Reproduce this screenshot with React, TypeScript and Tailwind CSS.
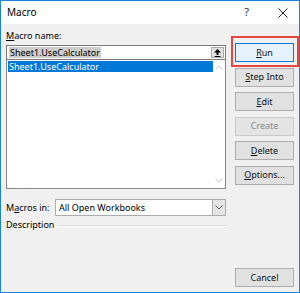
const font = { fontFamily: '"Noto Sans", "Open Sans", sans-serif' }

function U({ children }: { children: string }) {
  return <span className="underline underline-offset-[1px]">{children}</span>
}

function Btn({ children, disabled, focus }: { children: React.ReactNode; disabled?: boolean; focus?: boolean }) {
  return (
    <div
      className={
        'h-[19px] w-[59px] flex items-center justify-center text-[9px] border ' +
        (disabled
          ? 'bg-[#e4e4e4] border-[#c9c9c9] text-[#8a8a8a]'
          : focus
          ? 'bg-[#e5f1fb] border-[#0078d7] text-[#111]'
          : 'bg-[#e1e1e1] border-[#adadad] text-[#111]')
      }
    >
      {children}
    </div>
  )
}

function Chevron({ up, color }: { up?: boolean; color: string }) {
  return (
    <svg width="8" height="5" viewBox="0 0 8 5">
      <path d={up ? 'M0.5 4.5 L4 1 L7.5 4.5' : 'M0.5 0.5 L4 4 L7.5 0.5'} fill="none" stroke={color} strokeWidth="1" />
    </svg>
  )
}

export default function App() {
  return (
    <div style={font} className="w-[300px] h-[293px] border border-[#1883d7] flex flex-col bg-[#f0f0f0] text-black">
      <div className="h-[23px] bg-white flex items-center pl-[6px] pr-[11px] shrink-0">
        <span className="text-[10px]">Macro</span>
        <span className="ml-auto text-[11px] mr-[29px] text-[#333]">?</span>
        <svg width="10" height="10" viewBox="0 0 10 10">
          <path d="M0.5 0.5 L9.5 9.5 M9.5 0.5 L0.5 9.5" stroke="#222" strokeWidth="1" />
        </svg>
      </div>

      <div className="flex-1 flex pl-[5px]">
        <div className="w-[220px] flex flex-col pt-[6px]">
          <div className="text-[9px] leading-[11px]">
            <U>M</U>acro name:
          </div>
          <div className="mt-[4px] h-[15px] bg-white border border-[#7a7a7a] flex items-center pl-[2px] pr-[1px]">
            <span className="bg-[#cdcdcd] text-[9px] leading-[11px] px-[1px]">Sheet1.UseCalculator</span>
            <div className="ml-auto h-[11px] w-[13px] bg-[#e1e1e1] border border-[#adadad] flex items-center justify-center">
              <svg width="7" height="8" viewBox="0 0 7 8">
                <path d="M3.5 0 L7 3.5 L4.5 3.5 L4.5 6 L2.5 6 L2.5 3.5 L0 3.5 Z" fill="#000" />
                <rect x="0.5" y="7" width="6" height="1" fill="#000" />
              </svg>
            </div>
          </div>
          <div className="h-[129px] bg-white border border-[#828790] border-t-0 flex">
            <div className="flex-1 pl-[1px] pt-[1px]">
              <div className="h-[11px] bg-[#0078d7] text-white text-[9px] leading-[11px] pl-[1px]">Sheet1.UseCalculator</div>
            </div>
            <div className="w-[12px] flex flex-col items-center justify-between py-[5px]">
              <Chevron up color="#c8c8c8" />
              <Chevron color="#c8c8c8" />
            </div>
          </div>

          <div className="mt-[10px] flex items-center h-[17px]">
            <div className="w-[49px] text-[9px]">
              M<U>a</U>cros in:
            </div>
            <div className="flex-1 h-[17px] bg-white border border-[#acacac] flex items-center">
              <span className="text-[9px] pl-[3px]">All Open Workbooks</span>
              <div className="ml-auto h-full w-[13px] bg-[#e5e5e5] border-l border-[#acacac] flex items-center justify-center">
                <Chevron color="#555" />
              </div>
            </div>
          </div>
          <div className="mt-[2px] flex items-center">
            <span className="text-[9px]">Description</span>
            <div className="flex-1 ml-[4px] mt-[2px] border-t border-[#dcdcdc] border-b-white border-b" />
          </div>
        </div>

        <div className="ml-[9px] flex flex-col pt-[19px] pb-[5px] relative">
          <div className="absolute left-[-4px] top-[12px] w-[68px] h-[31px] border-2 border-[#e8453c]" />
          <div className="flex flex-col gap-[5.5px]">
            <Btn focus>
              <U>R</U>un
            </Btn>
            <Btn>
              <U>S</U>tep Into
            </Btn>
            <Btn>
              <U>E</U>dit
            </Btn>
            <Btn disabled>Create</Btn>
            <Btn>
              <U>D</U>elete
            </Btn>
            <Btn>
              <U>O</U>ptions...
            </Btn>
          </div>
          <div className="mt-auto">
            <Btn>Cancel</Btn>
          </div>
        </div>
      </div>
    </div>
  )
}
